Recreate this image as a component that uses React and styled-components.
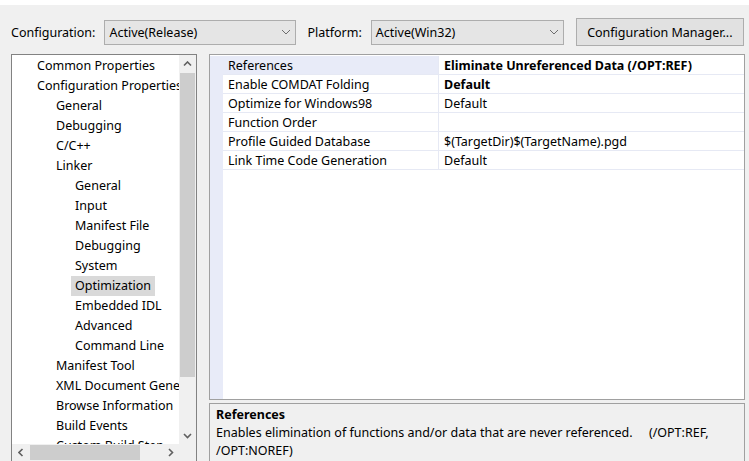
import React from 'react';
import styled, { createGlobalStyle } from 'styled-components';

const GlobalStyle = createGlobalStyle`
  html, body {
    margin: 0;
    padding: 0;
    background: #f0f0f0;
    overflow: hidden;
  }
  body {
    font-family: "Noto Sans", "Liberation Sans", sans-serif;
    font-size: 12.5px;
    color: #000;
  }
  * { box-sizing: border-box; }
`;

const Page = styled.div`
  width: 749px;
  height: 461px;
  overflow: hidden;
  display: flex;
  flex-direction: column;
`;

const TopStrip = styled.div`
  height: 5px;
  background: #fff;
  flex-shrink: 0;
`;

const Toolbar = styled.div`
  display: flex;
  align-items: center;
  height: 26px;
  margin-top: 14px;
  padding-left: 11px;
`;

const Label = styled.span`
  margin-right: ${p => p.gap}px;
  white-space: nowrap;
`;

const Select = styled.div`
  width: ${p => p.width}px;
  height: 25px;
  border: 1px solid #adadad;
  background: #e5e5e5;
  display: flex;
  align-items: center;
  justify-content: space-between;
  padding: 0 4px 0 4px;
  margin-right: ${p => p.gap}px;
`;

const Button = styled.div`
  width: 168px;
  height: 28px;
  border: 1px solid #adadad;
  background: #e1e1e1;
  display: flex;
  align-items: center;
  justify-content: center;
`;

const Body = styled.div`
  flex: 1;
  display: flex;
  margin-top: 9px;
  padding-left: 11px;
  gap: 12px;
  min-height: 0;
`;

const TreePanel = styled.div`
  width: 186px;
  height: 408px;
  border: 1px solid #828282;
  background: #fff;
  display: grid;
  grid-template-columns: 1fr 17px;
  grid-template-rows: 1fr 17px;
  flex-shrink: 0;
`;

const TreeList = styled.div`
  overflow: hidden;
  padding-top: 1px;
`;

const TreeItem = styled.div`
  height: 20px;
  display: flex;
  align-items: center;
  padding-left: ${p => 25 + p.level * 19}px;
  white-space: nowrap;
`;

const TreeText = styled.span`
  padding: 0 4px;
  margin-left: -4px;
  line-height: 20px;
  background: ${p => (p.selected ? '#d9d9d9' : 'transparent')};
`;

const VScroll = styled.div`
  background: #f0f0f0;
  display: flex;
  flex-direction: column;
  align-items: center;
  min-height: 0;
`;

const HScroll = styled.div`
  background: #f0f0f0;
  display: flex;
  align-items: center;
`;

const Corner = styled.div`
  background: #f0f0f0;
`;

const Arrow = styled.div`
  width: 17px;
  height: 17px;
  display: flex;
  align-items: center;
  justify-content: center;
  flex-shrink: 0;
`;

const VThumb = styled.div`
  width: 15px;
  height: 304px;
  margin-top: 1px;
  background: #cdcdcd;
  flex-shrink: 0;
`;

const HThumb = styled.div`
  width: 110px;
  height: 15px;
  margin-left: 1px;
  background: #cdcdcd;
`;

const Spacer = styled.div`
  flex: 1;
`;

const RightSide = styled.div`
  width: 536px;
  display: flex;
  flex-direction: column;
  gap: 3px;
`;

const Grid = styled.div`
  height: 346px;
  border: 1px solid #a0a0a0;
  background: #fff;
  display: flex;
  flex-direction: column;
  padding-top: 1px;
`;

const Row = styled.div`
  display: grid;
  grid-template-columns: 13px 216px 1fr;
  height: 19px;
`;

const Gutter = styled.div`
  background: #e8ebf8;
`;

const Cell = styled.div`
  border-bottom: 1px solid #e6e9f4;
  border-right: ${p => (p.name ? '1px solid #e6e9f4' : 'none')};
  background: ${p => (p.selected ? '#e8ebf8' : '#fff')};
  font-weight: ${p => (p.bold ? 700 : 400)};
  padding: 1px 0 0 5px;
  line-height: 17px;
  white-space: nowrap;
  overflow: hidden;
`;

const Filler = styled.div`
  flex: 1;
  display: grid;
  grid-template-columns: 13px 1fr;
`;

const Desc = styled.div`
  flex: 1;
  border: 1px solid #a0a0a0;
  border-bottom: none;
  background: #f0f0f0;
  padding: 2px 6px 0 6px;
  line-height: 18px;
`;

const DescTitle = styled.div`
  font-weight: 700;
`;

const Chevron = ({ dir }) => {
  const paths = {
    down: 'M1 1 L4.5 4.5 L8 1',
    up: 'M1 4.5 L4.5 1 L8 4.5',
    left: 'M4.5 1 L1 4.5 L4.5 8',
    right: 'M1 1 L4.5 4.5 L1 8',
  };
  const wide = dir === 'up' || dir === 'down';
  return (
    <svg width={wide ? 9 : 6} height={wide ? 6 : 9} viewBox={wide ? '0 0 9 6' : '0 0 6 9'}>
      <path d={paths[dir]} fill="none" stroke="#606060" strokeWidth="1.6" />
    </svg>
  );
};

const SelectChevron = () => (
  <svg width="10" height="6" viewBox="0 0 10 6">
    <path d="M1 1 L5 5 L9 1" fill="none" stroke="#6d6d6d" strokeWidth="1" />
  </svg>
);

const treeItems = [
  ['Common Properties', 0],
  ['Configuration Properties', 0],
  ['General', 1],
  ['Debugging', 1],
  ['C/C++', 1],
  ['Linker', 1],
  ['General', 2],
  ['Input', 2],
  ['Manifest File', 2],
  ['Debugging', 2],
  ['System', 2],
  ['Optimization', 2, true],
  ['Embedded IDL', 2],
  ['Advanced', 2],
  ['Command Line', 2],
  ['Manifest Tool', 1],
  ['XML Document Generator', 1],
  ['Browse Information', 1],
  ['Build Events', 1],
  ['Custom Build Step', 1],
];

const props = [
  { name: 'References', value: 'Eliminate Unreferenced Data (/OPT:REF)', bold: true, selected: true },
  { name: 'Enable COMDAT Folding', value: 'Default', bold: true },
  { name: 'Optimize for Windows98', value: 'Default' },
  { name: 'Function Order', value: '' },
  { name: 'Profile Guided Database', value: '$(TargetDir)$(TargetName).pgd' },
  { name: 'Link Time Code Generation', value: 'Default' },
];

const App = () => (
  <Page>
    <GlobalStyle />
    <TopStrip />
    <Toolbar>
      <Label gap={9}>Configuration:</Label>
      <Select width={192} gap={11}>
        <span>Active(Release)</span>
        <SelectChevron />
      </Select>
      <Label gap={9}>Platform:</Label>
      <Select width={193} gap={12}>
        <span>Active(Win32)</span>
        <SelectChevron />
      </Select>
      <Button>Configuration Manager...</Button>
    </Toolbar>
    <Body>
      <TreePanel>
        <TreeList>
          {treeItems.map(([text, level, selected], i) => (
            <TreeItem key={i} level={level}>
              <TreeText selected={selected}>{text}</TreeText>
            </TreeItem>
          ))}
        </TreeList>
        <VScroll>
          <Arrow><Chevron dir="up" /></Arrow>
          <VThumb />
          <Spacer />
          <Arrow><Chevron dir="down" /></Arrow>
        </VScroll>
        <HScroll>
          <Arrow><Chevron dir="left" /></Arrow>
          <HThumb />
          <Spacer />
          <Arrow><Chevron dir="right" /></Arrow>
        </HScroll>
        <Corner />
      </TreePanel>
      <RightSide>
        <Grid>
          {props.map(p => (
            <Row key={p.name}>
              <Gutter />
              <Cell name="1" selected={p.selected}>{p.name}</Cell>
              <Cell bold={p.bold}>{p.value}</Cell>
            </Row>
          ))}
          <Filler>
            <Gutter />
            <div />
          </Filler>
        </Grid>
        <Desc>
          <DescTitle>References</DescTitle>
          <div>
            Enables elimination of functions and/or data that are never referenced.&nbsp;&nbsp;&nbsp;&nbsp;&nbsp;(/OPT:REF,
            /OPT:NOREF)
          </div>
        </Desc>
      </RightSide>
    </Body>
  </Page>
);

export default App;
